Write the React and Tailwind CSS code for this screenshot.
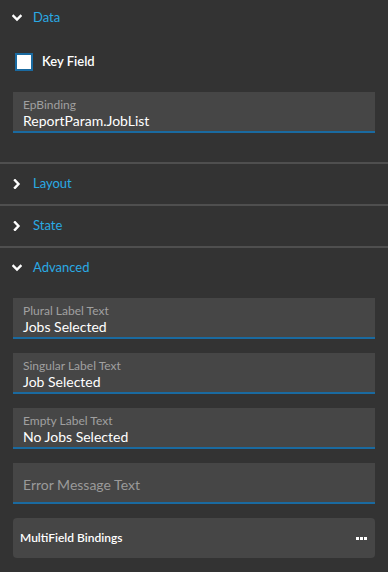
import React from "react";

const font = { fontFamily: "Lato, 'Open Sans', sans-serif" };

function ChevDown() {
  return (
    <svg width="10" height="10" viewBox="0 0 10 10" className="block">
      <path d="M1.5 3 L5 6.5 L8.5 3" fill="none" stroke="#ffffff" strokeWidth="2.4" strokeLinecap="square" />
    </svg>
  );
}
function ChevRight() {
  return (
    <svg width="10" height="10" viewBox="0 0 10 10" className="block">
      <path d="M3 1.2 L6.5 5 L3 8.8" fill="none" stroke="#ffffff" strokeWidth="2.4" strokeLinecap="square" />
    </svg>
  );
}

function Header({ open, title, className }) {
  return (
    <div className={"flex items-center pl-[12px] " + className}>
      <div className="w-[10px] flex justify-center">{open ? <ChevDown /> : <ChevRight />}</div>
      <span className="ml-[11px] text-[13px] text-[#2aaae4]">{title}</span>
    </div>
  );
}

function Field({ label, value }) {
  return (
    <div className="mx-[13px] h-[41px] bg-[#464646] border-b-2 border-[#1a6aa0] pl-[10px] flex flex-col">
      <div className="pt-[6px] text-[12px] leading-[14px] text-[#a0a0a0]">{label}</div>
      <div className="text-[14px] leading-[18px] text-white">{value}</div>
    </div>
  );
}

function Divider() {
  return <div className="h-[2px] bg-[#4f4f4f]" />;
}

export default function App() {
  return (
    <div className="w-[388px] h-[572px] bg-[#333333] overflow-hidden" style={font}>
      <Header open title="Data" className="h-[36px]" />
      <div className="flex items-center ml-[15px] mt-[17px] h-[18px]">
        <div className="w-[18px] h-[18px] border-2 border-[#1a6aa0] bg-white" />
        <span className="ml-[9px] text-[13px] text-white font-semibold">Key Field</span>
      </div>
      <div className="mt-[21px]">
        <Field label="EpBinding" value="ReportParam.JobList" />
      </div>
      <div className="h-[29px]" />
      <Divider />
      <Header title="Layout" className="h-[40px]" />
      <Divider />
      <Header title="State" className="h-[40px]" />
      <Divider />
      <Header open title="Advanced" className="h-[40px]" />
      <div className="mt-[10px] flex flex-col gap-[14px]">
        <Field label="Plural Label Text" value="Jobs Selected" />
        <Field label="Singular Label Text" value="Job Selected" />
        <Field label="Empty Label Text" value="No Jobs Selected" />
        <div className="mx-[13px] h-[41px] bg-[#464646] border-b-2 border-[#1a6aa0] pl-[10px] pt-[3px] flex items-center">
          <span className="text-[14px] text-[#9a9a9a]">Error Message Text</span>
        </div>
        <div className="mx-[13px] h-[40px] bg-[#464646] rounded-[4px] pl-[7px] pr-[8px] flex items-center justify-between">
          <span className="text-[12px] font-semibold text-white">MultiField Bindings</span>
          <div className="flex gap-[1px]">
            <div className="w-[3px] h-[3px] bg-white" />
            <div className="w-[3px] h-[3px] bg-white" />
            <div className="w-[3px] h-[3px] bg-white" />
          </div>
        </div>
      </div>
    </div>
  );
}
